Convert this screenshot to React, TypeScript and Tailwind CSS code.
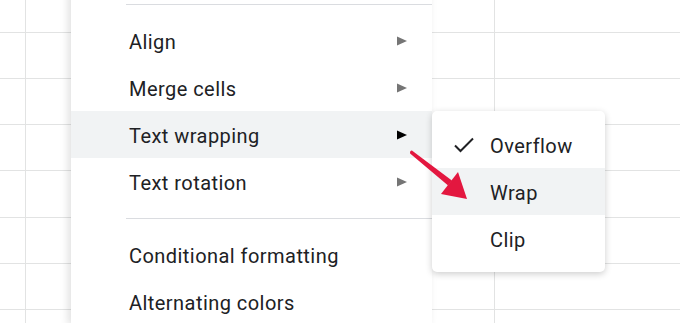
const rowHeights = [33, 46, 46, 46, 47, 46, 46, 46];

function SheetGrid() {
  return (
    <div className="flex flex-col">
      {rowHeights.map((h, i) => (
        <div key={i} className="flex border-b border-[#e2e3e3]" style={{ height: h }}>
          <div className="w-[26px] border-r border-[#e2e3e3]" />
          <div className="w-[469px] border-r border-[#e2e3e3]" />
          <div className="flex-1" />
        </div>
      ))}
    </div>
  );
}

function Caret({ dark }: { dark?: boolean }) {
  return (
    <svg width="10" height="10" viewBox="0 0 10 10" className="mr-[25px]">
      <path d="M0 0.5 L10 5 L0 9.5 Z" fill={dark ? "#000000" : "#757575"} />
    </svg>
  );
}

function MenuItem({ label, sub, active }: { label: string; sub?: boolean; active?: boolean }) {
  return (
    <div className={`flex h-[47px] items-center justify-between pl-[58px] ${active ? "bg-[#f1f3f4]" : ""}`}>
      <span className="pt-[2px]">{label}</span>
      {sub && <Caret dark={active} />}
    </div>
  );
}

function Separator() {
  return (
    <div className="flex h-[26px] items-center pl-[55px]">
      <div className="h-px w-full bg-[#dadce0]" />
    </div>
  );
}

export default function App() {
  return (
    <div
      className="relative h-[323px] w-[680px] overflow-hidden bg-white text-[#202124]"
      style={{ fontFamily: "Roboto, 'Noto Sans', sans-serif" }}
    >
      <SheetGrid />

      {/* format menu */}
      <div className="absolute left-[71px] top-[-9px] w-[361px] bg-white text-[20px] tracking-[0.45px] shadow-[-3px_0_8px_rgba(0,0,0,0.12)]">
        <Separator />
        <MenuItem label="Align" sub />
        <MenuItem label="Merge cells" sub />
        <MenuItem label="Text wrapping" sub active />
        <MenuItem label="Text rotation" sub />
        <Separator />
        <MenuItem label="Conditional formatting" />
        <MenuItem label="Alternating colors" />
      </div>

      {/* text wrapping submenu */}
      <div className="absolute left-[432px] top-[111px] w-[173px] rounded-[5px] bg-white py-[10px] text-[20px] tracking-[0.45px] shadow-[0_2px_7px_rgba(0,0,0,0.2)]">
        <div className="flex h-[47px] items-center">
          <svg width="58" height="20" viewBox="0 0 58 20" className="shrink-0">
            <path d="M23 10.5 L28.5 16 L41 3.5" fill="none" stroke="#202124" strokeWidth="2" />
          </svg>
          <span className="pt-[2px]">Overflow</span>
        </div>
        <div className="flex h-[47px] items-center bg-[#f1f3f4] pl-[58px]">
          <span className="pt-[2px]">Wrap</span>
        </div>
        <div className="flex h-[47px] items-center pl-[58px]">
          <span className="pt-[2px]">Clip</span>
        </div>
      </div>

      {/* annotation arrow */}
      <svg className="pointer-events-none absolute left-0 top-0" width="680" height="323">
        <path
          d="M411.9 150.6 L451.9 180.6 L448.1 185.4 L410.1 153.4 Q409.5 151 411.9 150.6 Z"
          fill="#e3173f"
        />
        <path d="M441 194 L458 172 L467 199 Z" fill="#e3173f" />
      </svg>
    </div>
  );
}
